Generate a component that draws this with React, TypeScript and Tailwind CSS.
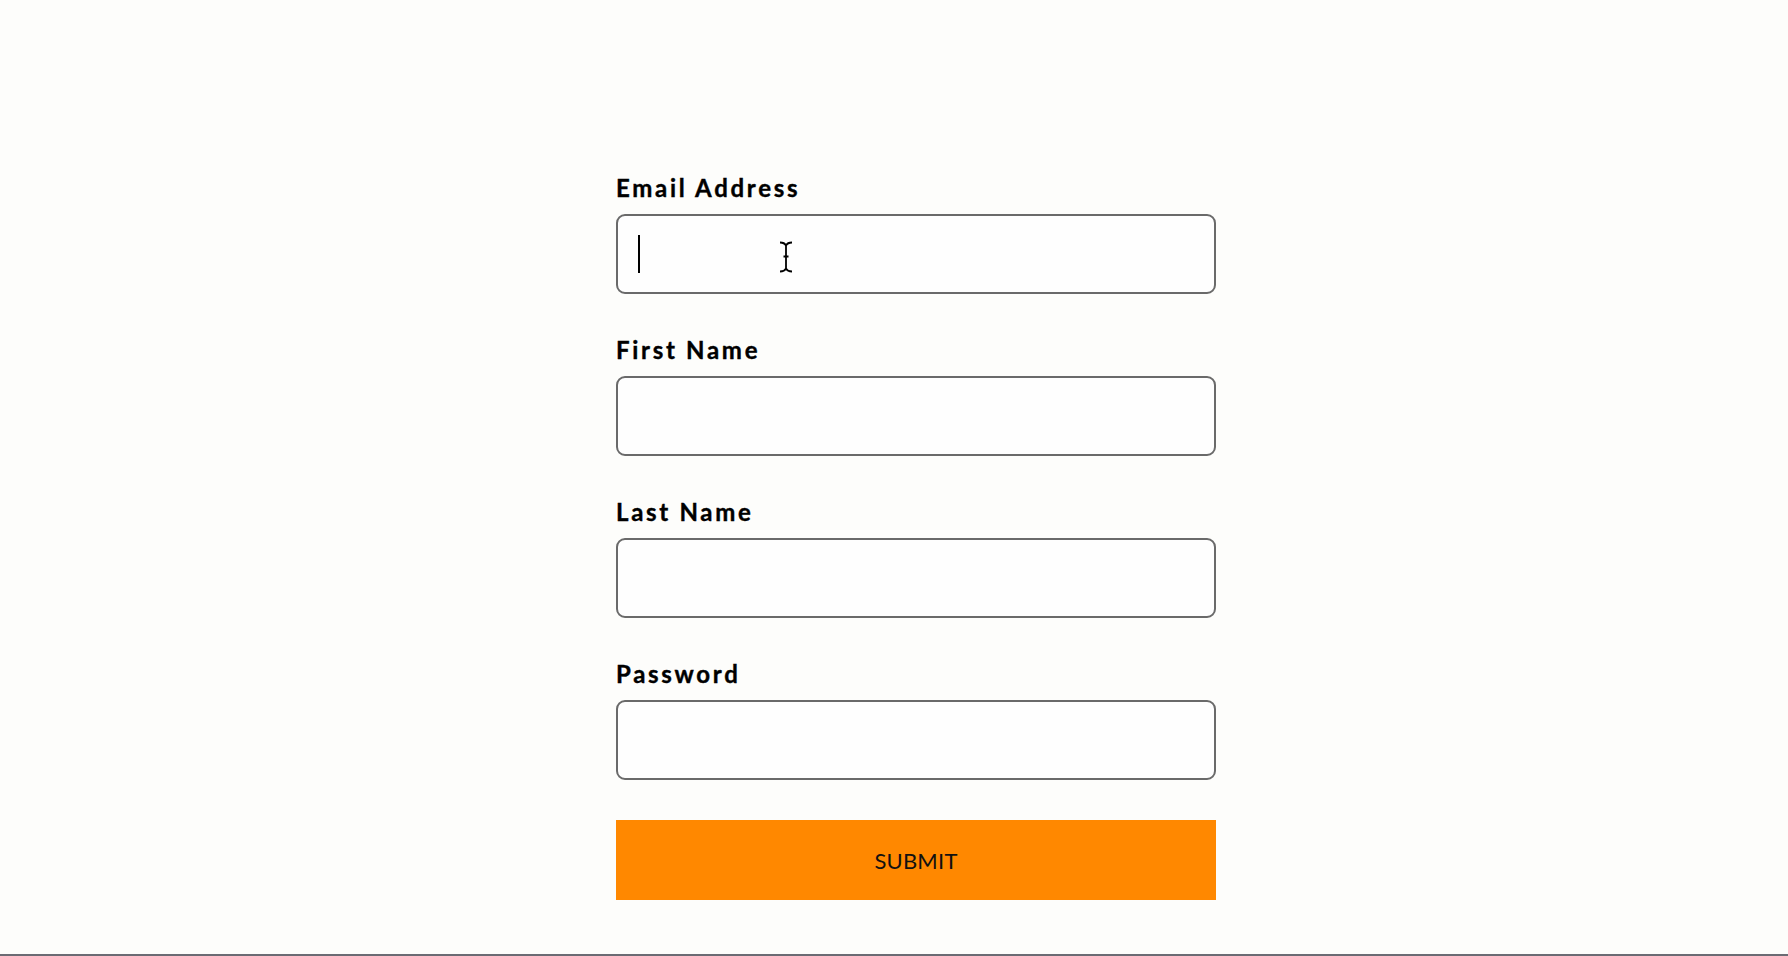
import React from "react";

const fields = ["Email Address", "First Name", "Last Name", "Password"];

const IBeam: React.FC = () => (
  <svg width="16" height="32" viewBox="0 0 16 32" className="absolute left-[160px] top-[25px]">
    <path
      d="M2 1.5c3 0 5 1 6 3M14 1.5c-3 0-5 1-6 3M8 4.5v23M5.5 15.5h5M2 30.5c3 0 5-1 6-3M14 30.5c-3 0-5-1-6-3"
      fill="none"
      stroke="#000"
      strokeWidth="1.8"
    />
  </svg>
);

const App: React.FC = () => {
  return (
    <div className="h-screen bg-[#fdfdfb] border-b-2 border-[#6b6b73] flex justify-center pl-[44px] pt-[174px] font-['Lato','Open_Sans',sans-serif]">
      <form className="w-[600px] flex flex-col" onSubmit={(e) => e.preventDefault()}>
        <div className="flex flex-col gap-[42px]">
          {fields.map((label, i) => (
            <div key={label} className="flex flex-col">
              <label className="text-[24px] leading-[28px] font-bold tracking-[2.7px] text-black [-webkit-text-stroke:0.4px_black]">
                {label}
              </label>
              <div className="relative mt-[12px] h-[80px] rounded-[9px] border-2 border-[#6a6a6a] bg-[#fefefe]">
                {i === 0 && (
                  <>
                    <div className="absolute left-[20px] top-[19px] w-[2px] h-[38px] bg-black" />
                    <IBeam />
                  </>
                )}
              </div>
            </div>
          ))}
        </div>
        <button
          type="submit"
          className="mt-[40px] h-[80px] w-full bg-[#ff8800] text-[22px] text-[#111] tracking-[0.01em]"
        >
          SUBMIT
        </button>
      </form>
    </div>
  );
};

export default App;
